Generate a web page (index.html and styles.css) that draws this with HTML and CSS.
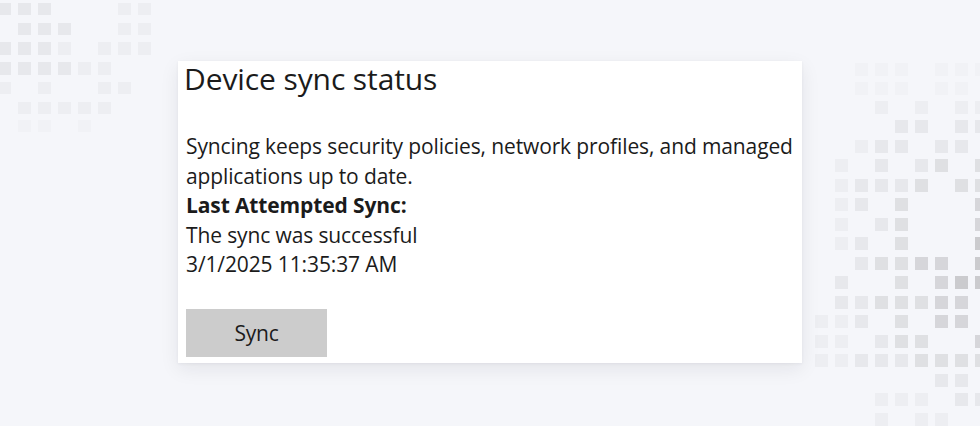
FILE: index.html
```html
<!DOCTYPE html>
<html lang="en">
<head>
<meta charset="utf-8">
<title>Device sync status</title>
<link rel="stylesheet" href="styles.css">
</head>
<body>
<svg class="backdrop" width="980" height="426" viewBox="0 0 980 426" aria-hidden="true">
  <g class="l2"><rect x="-2" y="3" width="13" height="12"/><rect x="18" y="3" width="13" height="12"/><rect x="38" y="3" width="13" height="12"/></g>
  <g class="l1"><rect x="118" y="3" width="13" height="12"/><rect x="138" y="3" width="13" height="12"/></g>
  <g class="l2"><rect x="18" y="23" width="13" height="12"/><rect x="38" y="23" width="13" height="12"/><rect x="58" y="23" width="13" height="12"/></g>
  <g class="l1"><rect x="118" y="23" width="13" height="12"/><rect x="138" y="23" width="13" height="12"/></g>
  <g class="l2"><rect x="-2" y="42" width="13" height="13"/><rect x="18" y="42" width="13" height="13"/><rect x="38" y="42" width="13" height="13"/></g>
  <g class="l1"><rect x="58" y="42" width="13" height="13"/><rect x="98" y="42" width="13" height="13"/><rect x="118" y="42" width="13" height="13"/><rect x="138" y="42" width="13" height="13"/></g>
  <g class="l2"><rect x="-2" y="62" width="13" height="13"/><rect x="18" y="62" width="13" height="13"/><rect x="38" y="62" width="13" height="13"/><rect x="58" y="62" width="13" height="13"/></g>
  <g class="l1"><rect x="78" y="62" width="13" height="13"/><rect x="98" y="62" width="13" height="13"/></g>
  <g class="l1"><rect x="-2" y="82" width="13" height="12"/><rect x="38" y="82" width="13" height="12"/><rect x="98" y="82" width="13" height="12"/><rect x="118" y="82" width="13" height="12"/></g>
  <g class="l1"><rect x="18" y="102" width="13" height="12"/><rect x="38" y="102" width="13" height="12"/><rect x="58" y="102" width="13" height="12"/><rect x="78" y="102" width="13" height="12"/><rect x="98" y="102" width="13" height="12"/></g>
  <g class="l0"><rect x="18" y="120" width="13" height="12"/><rect x="38" y="120" width="13" height="12"/><rect x="78" y="120" width="13" height="12"/></g>

  <g class="l0"><rect x="855" y="63" width="13" height="13"/><rect x="875" y="63" width="13" height="13"/><rect x="895" y="63" width="13" height="13"/><rect x="935" y="63" width="13" height="13"/><rect x="955" y="63" width="13" height="13"/><rect x="975" y="63" width="13" height="13"/></g>
  <g class="l0"><rect x="855" y="82" width="13" height="13"/><rect x="875" y="82" width="13" height="13"/><rect x="895" y="82" width="13" height="13"/><rect x="935" y="82" width="13" height="13"/><rect x="955" y="82" width="13" height="13"/></g>

  <g class="l1"><rect x="875" y="101" width="13" height="13"/><rect x="915" y="101" width="13" height="13"/><rect x="955" y="101" width="13" height="13"/><rect x="975" y="101" width="13" height="13"/></g>
  <g class="l2"><rect x="895" y="120" width="13" height="13"/><rect x="915" y="120" width="13" height="13"/><rect x="955" y="120" width="13" height="13"/><rect x="975" y="120" width="13" height="13"/></g>
  <g class="l1"><rect x="855" y="140" width="13" height="13"/></g>
  <g class="l2"><rect x="875" y="140" width="13" height="13"/><rect x="895" y="140" width="13" height="13"/><rect x="935" y="140" width="13" height="13"/><rect x="955" y="140" width="13" height="13"/></g>
  <g class="l1"><rect x="835" y="159" width="13" height="13"/></g>
  <g class="l2"><rect x="875" y="159" width="13" height="13"/><rect x="915" y="159" width="13" height="13"/></g>
  <g class="l3"><rect x="935" y="159" width="13" height="13"/><rect x="975" y="159" width="13" height="13"/></g>
  <g class="l1"><rect x="835" y="179" width="13" height="13"/></g>
  <g class="l2"><rect x="855" y="179" width="13" height="13"/><rect x="875" y="179" width="13" height="13"/><rect x="895" y="179" width="13" height="13"/></g>
  <g class="l3"><rect x="915" y="179" width="13" height="13"/><rect x="955" y="179" width="13" height="13"/><rect x="975" y="179" width="13" height="13"/></g>
  <g class="l1"><rect x="835" y="198" width="13" height="13"/></g>
  <g class="l2"><rect x="855" y="198" width="13" height="13"/></g>
  <g class="l3"><rect x="895" y="198" width="13" height="13"/></g>
  <g class="l4"><rect x="975" y="198" width="13" height="13"/></g>
  <g class="l1"><rect x="835" y="218" width="13" height="13"/></g>
  <g class="l2"><rect x="875" y="218" width="13" height="13"/></g>
  <g class="l3"><rect x="895" y="218" width="13" height="13"/></g>
  <g class="l4"><rect x="975" y="218" width="13" height="13"/></g>
  <g class="l1"><rect x="835" y="237" width="13" height="13"/></g>
  <g class="l2"><rect x="855" y="237" width="13" height="13"/></g>
  <g class="l3"><rect x="895" y="237" width="13" height="13"/></g>
  <g class="l5"><rect x="975" y="237" width="13" height="13"/></g>
  <g class="l2"><rect x="855" y="257" width="13" height="13"/></g>
  <g class="l3"><rect x="875" y="257" width="13" height="13"/><rect x="895" y="257" width="13" height="13"/></g>
  <g class="l4"><rect x="915" y="257" width="13" height="13"/><rect x="935" y="257" width="13" height="13"/></g>
  <g class="l5"><rect x="975" y="257" width="13" height="13"/></g>
  <g class="l2"><rect x="835" y="276" width="13" height="13"/></g>
  <g class="l3"><rect x="895" y="276" width="13" height="13"/></g>
  <g class="l4"><rect x="935" y="276" width="13" height="13"/></g>
  <g class="l5"><rect x="955" y="276" width="13" height="13"/><rect x="975" y="276" width="13" height="13"/></g>
  <g class="l2"><rect x="835" y="296" width="13" height="13"/><rect x="855" y="296" width="13" height="13"/></g>
  <g class="l3"><rect x="875" y="296" width="13" height="13"/><rect x="895" y="296" width="13" height="13"/><rect x="915" y="296" width="13" height="13"/></g>
  <g class="l4"><rect x="935" y="296" width="13" height="13"/><rect x="955" y="296" width="13" height="13"/></g>
  <g class="l1"><rect x="815" y="315" width="13" height="13"/><rect x="835" y="315" width="13" height="13"/></g>
  <g class="l2"><rect x="855" y="315" width="13" height="13"/></g>
  <g class="l3"><rect x="895" y="315" width="13" height="13"/></g>
  <g class="l4"><rect x="935" y="315" width="13" height="13"/><rect x="955" y="315" width="13" height="13"/></g>
  <g class="l1"><rect x="815" y="335" width="13" height="13"/><rect x="835" y="335" width="13" height="13"/></g>
  <g class="l2"><rect x="875" y="335" width="13" height="13"/></g>
  <g class="l3"><rect x="895" y="335" width="13" height="13"/><rect x="915" y="335" width="13" height="13"/></g>
  <g class="l4"><rect x="975" y="335" width="13" height="13"/></g>
  <g class="l1"><rect x="815" y="354" width="13" height="13"/><rect x="835" y="354" width="13" height="13"/></g>
  <g class="l2"><rect x="855" y="354" width="13" height="13"/><rect x="875" y="354" width="13" height="13"/><rect x="895" y="354" width="13" height="13"/></g>
  <g class="l3"><rect x="915" y="354" width="13" height="13"/><rect x="935" y="354" width="13" height="13"/><rect x="955" y="354" width="13" height="13"/><rect x="975" y="354" width="13" height="13"/></g>
  <g class="l2"><rect x="935" y="374" width="13" height="13"/><rect x="955" y="374" width="13" height="13"/></g>
  <g class="l1"><rect x="875" y="393" width="13" height="13"/><rect x="895" y="393" width="13" height="13"/><rect x="915" y="393" width="13" height="13"/></g>
  <g class="l2"><rect x="955" y="393" width="13" height="13"/><rect x="975" y="393" width="13" height="13"/></g>
  <g class="l1"><rect x="875" y="413" width="13" height="13"/><rect x="915" y="413" width="13" height="13"/><rect x="935" y="413" width="13" height="13"/></g>
</svg>

<main class="card">
  <h1 class="title">Device sync status</h1>
  <div class="body">
    <p class="line">Syncing keeps security policies, network profiles, and managed applications up to date.</p>
    <p class="line label">Last Attempted Sync:</p>
    <p class="line">The sync was successful</p>
    <p class="line">3/1/2025 11:35:37 AM</p>
  </div>
  <button class="sync-btn" type="button">Sync</button>
</main>
</body>
</html>
```

FILE: styles.css
```css
* {
  box-sizing: border-box;
}

html, body {
  margin: 0;
  padding: 0;
}

body {
  width: 980px;
  height: 426px;
  background: #f5f6fa;
  font-family: "Open Sans", "Noto Sans", "Liberation Sans", sans-serif;
  color: #1b1b1b;
  display: flex;
  align-items: center;
  justify-content: center;
  padding-bottom: 2px;
  position: relative;
  overflow: hidden;
}

.backdrop {
  position: absolute;
  left: 0;
  top: 0;
}

.l0 { fill: #f1f2f6; }
.l1 { fill: #edeef2; }
.l2 { fill: #e7e8ec; }
.l3 { fill: #dfe0e3; }
.l4 { fill: #d6d6da; }
.l5 { fill: #cbcbce; }

.card {
  position: relative;
  width: 624px;
  height: 302px;
  background: #ffffff;
  box-shadow: 0 6px 18px rgba(20, 24, 40, 0.08), 0 1px 3px rgba(20, 24, 40, 0.05);
  padding: 0 3px 6px 8px;
  display: flex;
  flex-direction: column;
}

.title {
  margin: 1px 0 0 -2px;
  font-size: 30px;
  font-weight: 400;
  line-height: 34px;
  letter-spacing: -0.1px;
}

.body {
  margin-top: 36px;
}

.line {
  margin: 0;
  font-size: 21px;
  line-height: 29.5px;
  letter-spacing: -0.12px;
}

.label {
  font-weight: 700;
}

.sync-btn {
  margin-top: auto;
  width: 141px;
  height: 48px;
  border: none;
  background: #cccccc;
  font-family: inherit;
  font-size: 21px;
  letter-spacing: -0.2px;
  color: #1b1b1b;
  padding: 0;
}
```
